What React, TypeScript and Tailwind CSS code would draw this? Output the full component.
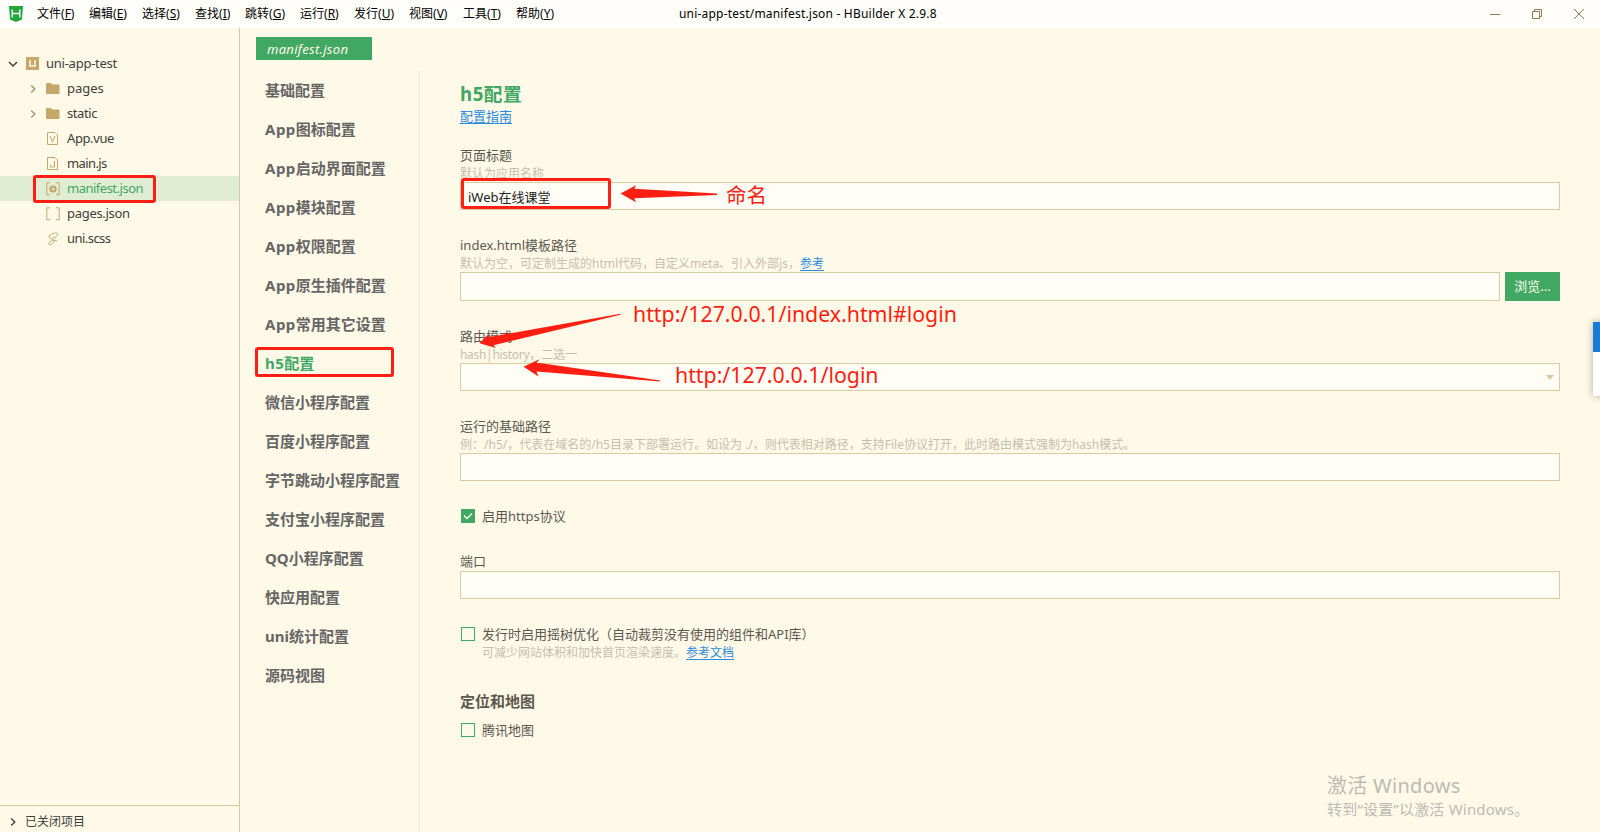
import { useState } from 'react';
import type { ReactNode } from 'react';

const MENUS = [
  { label: '文件', key: 'F', width: 'w-[52px]' },
  { label: '编辑', key: 'E', width: 'w-[53px]' },
  { label: '选择', key: 'S', width: 'w-[53px]' },
  { label: '查找', key: 'I', width: 'w-[50px]' },
  { label: '跳转', key: 'G', width: 'w-[55px]' },
  { label: '运行', key: 'R', width: 'w-[54px]' },
  { label: '发行', key: 'U', width: 'w-[55px]' },
  { label: '视图', key: 'V', width: 'w-[54px]' },
  { label: '工具', key: 'T', width: 'w-[53px]' },
  { label: '帮助', key: 'Y', width: 'w-[53px]' },
];

const SECTIONS = [
  { prefix: '', name: '基础配置' },
  { prefix: 'App', name: '图标配置' },
  { prefix: 'App', name: '启动界面配置' },
  { prefix: 'App', name: '模块配置' },
  { prefix: 'App', name: '权限配置' },
  { prefix: 'App', name: '原生插件配置' },
  { prefix: 'App', name: '常用其它设置' },
  { prefix: 'h5', name: '配置' },
  { prefix: '', name: '微信小程序配置' },
  { prefix: '', name: '百度小程序配置' },
  { prefix: '', name: '字节跳动小程序配置' },
  { prefix: '', name: '支付宝小程序配置' },
  { prefix: '', name: 'QQ小程序配置' },
  { prefix: '', name: '快应用配置' },
  { prefix: '', name: 'uni统计配置' },
  { prefix: '', name: '源码视图' },
];

type IconName = 'folder' | 'vue' | 'js' | 'manifest' | 'brackets' | 'scss';

const FILES: { name: string; icon: IconName; tracking: string }[] = [
  { name: 'pages', icon: 'folder', tracking: 'tracking-normal' },
  { name: 'static', icon: 'folder', tracking: 'tracking-[-0.4px]' },
  { name: 'App.vue', icon: 'vue', tracking: 'tracking-[-0.4px]' },
  { name: 'main.js', icon: 'js', tracking: 'tracking-[-0.6px]' },
  { name: 'manifest.json', icon: 'manifest', tracking: 'tracking-[-0.5px]' },
  { name: 'pages.json', icon: 'brackets', tracking: 'tracking-[-0.3px]' },
  { name: 'uni.scss', icon: 'scss', tracking: 'tracking-[-0.55px]' },
];

function Chevron({ open = false, className }: { open?: boolean; className?: string }) {
  return (
    <svg width="10" height="10" viewBox="0 0 10 10" fill="none" stroke="currentColor" strokeWidth="1.5" className={className}>
      {open ? <path d="M1 3l4 4 4-4" /> : <path d="M3 1l4 4-4 4" />}
    </svg>
  );
}

function FileIcon({ icon }: { icon: IconName }) {
  return (
    <svg width="14" height="14" viewBox="0 0 14 14" fill="none" stroke="#c4a769" strokeWidth="1" className="shrink-0">
      {icon === 'folder' && <path d="M.5 1.500h4.500l1.500 1.500h6.500v8.500h-12.500z" fill="#c4a769" />}
      {(icon === 'vue' || icon === 'js') && <path d="M1.500.5h7.500l2.500 2.500v9.500h-10z" />}
      {icon === 'vue' && <path d="M4 4l2.500 6 2.500-6" />}
      {icon === 'js' && <path d="M8.500 4v6h-4v-2" />}
      {(icon === 'manifest' || icon === 'brackets') && (
        <path d="M4 .8h-3.200v12h3.200M10 .8h3.200v12h-3.200" />
      )}
      {icon === 'manifest' && (
        <>
          <circle cx="7" cy="7" r="2.200" strokeWidth="1.800" />
          <path d="M7 3v1.500M7 9.500v1.500M3 7h1.500M9.500 7h1.500M4.200 4.200l1 1M8.800 8.800l1 1M9.800 4.200l-1 1M5.200 8.800l-1 1" strokeWidth="1.300" />
        </>
      )}
      {icon === 'scss' && (
        <path d="M11.500 3.500c1.200-2.200-1-3.200-4-2.200-4 1.200-5.800 3.900-3.300 5 2.500 1.200 4.300 1.200 3.800 3.200-.7 2.500-5 4-5.500 2.500-.5-1.300 2-3.300 5.500-3.800l3 .3M11.500 3.500c-1.500 2-3.500 2.500-5 2" strokeWidth="1" />
      )}
    </svg>
  );
}

function TitleBar() {
  return (
    <header className="relative flex h-7 shrink-0 items-center bg-[#fffefa] text-xs text-black">
      <svg width="14" height="16" viewBox="0 0 14 16" className="ml-[9px] shrink-0">
        <path d="M0 0h14l-1 13.500-6 2.500-6-2.500z" fill="#23a63c" />
        <path d="M3.200 3.500v8M10.800 3.500v8M3.200 7.500h7.600" stroke="#fff" strokeWidth="1.400" />
      </svg>
      <nav className="ml-[14px] flex">
        {MENUS.map((menu) => (
          <button key={menu.key} type="button" className={`${menu.width} text-left leading-4 whitespace-nowrap`}>
            {menu.label}(<span className="underline underline-offset-1">{menu.key}</span>)
          </button>
        ))}
      </nav>
      <h1 className="absolute left-[679px] top-1.5 leading-4 tracking-[0.2px] whitespace-nowrap">
        uni-app-test/manifest.json - HBuilder X 2.9.8
      </h1>
      <div className="ml-auto mr-4 flex items-center gap-8 text-[#8d7a4e]">
        <svg width="10" height="10" viewBox="0 0 10 10" stroke="currentColor">
          <path d="M0 5.500h10" />
        </svg>
        <svg width="10" height="10" viewBox="0 0 10 10" fill="none" stroke="currentColor">
          <path d="M.5 2.500h7v7h-7zM2.500 2.500v-2h7v7h-2" />
        </svg>
        <svg width="10" height="10" viewBox="0 0 10 10" stroke="currentColor">
          <path d="M0 0l10 10M10 0l-10 10" />
        </svg>
      </div>
    </header>
  );
}

function Sidebar() {
  return (
    <aside className="flex w-60 shrink-0 flex-col border-r border-[#d6c99b] text-[13px] text-[#403e39]">
      <div className="mt-[23px] flex h-[25px] items-center">
        <Chevron open className="ml-2 text-[#403e39]" />
        <svg width="13" height="13" viewBox="0 0 13 13" className="ml-2">
          <path d="M0 0h13v13h-13z" fill="#c4a769" />
          <path d="M4 3v6h5v-6" fill="none" stroke="#fff9e8" strokeWidth="1.500" />
        </svg>
        <span className="ml-[7px] tracking-[-0.25px]">uni-app-test</span>
      </div>
      {FILES.map((file) => {
        const active = file.icon === 'manifest';
        return (
          <div
            key={file.name}
            className={`relative flex h-[25px] items-center pl-7 ${active ? 'bg-[#e0edd3] text-[#41a863]' : ''}`}
          >
            <span className="w-[18px]">
              {file.icon === 'folder' && <Chevron className="scale-90 text-[#9c9377]" />}
            </span>
            <FileIcon icon={file.icon} />
            <span className={`ml-[7px] ${file.tracking}`}>{file.name}</span>
            {active && (
              <span className="absolute -top-px left-[33px] h-7 w-[123px] rounded-[3px] border-3 border-[#ff1f12]" />
            )}
          </div>
        );
      })}
      <div className="mt-auto flex h-[27px] items-center border-t border-[#d6c99b] pt-1.5 text-xs">
        <Chevron className="ml-2 scale-90" />
        <span className="ml-[7px]">已关闭项目</span>
      </div>
    </aside>
  );
}

function Label({ children }: { children: ReactNode }) {
  return <div className="h-[18px] leading-4 whitespace-nowrap">{children}</div>;
}

function Hint({ children }: { children: ReactNode }) {
  return <div className="h-[17px] text-xs leading-[17px] whitespace-nowrap text-[#c6bfae]">{children}</div>;
}

function Link({ children }: { children: ReactNode }) {
  return (
    <a href="#" className="text-[#2a8be0] underline underline-offset-2">
      {children}
    </a>
  );
}

function Checkbox({ checked = false, children }: { checked?: boolean; children: ReactNode }) {
  return (
    <label className="ml-px flex h-[18px] items-center gap-[7px] leading-[18px] whitespace-nowrap">
      <span className={`flex size-3.5 items-center justify-center border border-[#41a863] ${checked ? 'bg-[#41a863]' : ''}`}>
        {checked && (
          <svg width="10" height="8" viewBox="0 0 10 8" fill="none" stroke="#fff9e8" strokeWidth="1.300" className="shrink-0">
            <path d="M1 3.500l3 3 5-5" />
          </svg>
        )}
      </span>
      {children}
    </label>
  );
}

const INPUT = 'block h-7 w-full border border-[#d8cca0] bg-[#fffdf5] px-[7px] text-[13px] text-[#222] outline-none';

// Red pen marks drawn over the form
function Annotations() {
  return (
    <div className="pointer-events-none absolute inset-0 text-[20.5px] leading-6 whitespace-nowrap text-[#ff1f12]">
      <span className="absolute left-[461px] top-[178px] h-[31px] w-[150px] rounded-[3px] border-3 border-[#ff1f12]" />
      <svg width="1600" height="832" viewBox="0 0 1600 832" fill="#ff1f12" className="absolute left-0 top-0">
        <path d="M620.500 193.500L636 185.300l-1.700 3.500L717 193.500v1.600L634.300 198.300l1.700 4z" />
        <path d="M479.500 343.300L488.500 334l-.5 3.200L620.500 313.800v1L493.500 345.200l2.500 2.800z" />
        <path d="M523.500 366.700L539.500 359.300l-3 3.700 5 .2L660 380.500v1L536.500 371.500l2 5z" />
      </svg>
      <span className="absolute left-[726px] top-[183px]">命名</span>
      <span className="absolute left-[633px] top-[302px] text-[21.3px]">http:/127.0.0.1/index.html#login</span>
      <span className="absolute left-[675px] top-[363px] text-[21.3px]">http:/127.0.0.1/login</span>
    </div>
  );
}

export default function App() {
  const [title, setTitle] = useState('iWeb在线课堂');

  return (
    <div className="relative flex h-[832px] w-[1600px] flex-col overflow-hidden bg-[#fff9e8] font-['Noto_Sans','Noto_Sans_CJK_SC',sans-serif]">
      <TitleBar />
      <div className="flex min-h-0 flex-1">
        <Sidebar />
        <main className="flex min-w-0 flex-1 flex-col">
          <div className="ml-4 mt-[9px] h-[23px] w-[116px] bg-[#41a863] pl-[11px] text-[13px] leading-[24px] tracking-[0.3px] text-[#fff9e8] italic">
            manifest.json
          </div>
          <div className="mt-[11px] flex min-h-0 flex-1">
            <nav className="w-[180px] shrink-0 border-r border-[#f1e8d2] text-[15px] font-bold text-[#666]">
              {SECTIONS.map(({ prefix, name }) => {
                const active = prefix === 'h5';
                return (
                  <div key={name} className="relative flex h-[39px] items-center pl-[25px] whitespace-nowrap">
                    <span className={active ? 'text-[#41a863]' : ''}>
                      <span className="tracking-[0.5px]">{prefix}</span>
                      {name}
                    </span>
                    {active && (
                      <span className="absolute left-[15px] top-[3px] h-[30px] w-[139px] rounded-[3px] border-3 border-[#ff1f12]" />
                    )}
                  </div>
                );
              })}
            </nav>
            <form className="ml-10 w-[1100px] pt-[11px] text-[13px] text-[#5c584f]">
              <h2 className="h-6 text-[18.67px] leading-6 font-bold tracking-[0.5px] text-[#41a863]">h5配置</h2>
              <div className="mt-px h-[19px] leading-[18px]">
                <Link>配置指南</Link>
              </div>

              <div className="mt-[21px]">
                <Label>页面标题</Label>
                <Hint>默认为应用名称</Hint>
                <input className={INPUT} value={title} onChange={(e) => setTitle(e.target.value)} />
              </div>

              <div className="mt-[27px]">
                <Label>index.html模板路径</Label>
                <Hint>
                  默认为空，可定制生成的html代码，自定义meta、引入外部js，<Link>参考</Link>
                </Hint>
                <div className="flex h-[29px] gap-[5px]">
                  <div className="flex-1 border border-[#d8cca0] bg-[#fffdf5]" />
                  <button type="button" className="w-[55px] bg-[#41a863] text-[#fff9e8]">
                    浏览...
                  </button>
                </div>
              </div>

              <div className="mt-[27px]">
                <Label>路由模式</Label>
                <Hint>
                  <span className="tracking-[-0.3px]">hash|history</span>，二选一
                </Hint>
                <div className="flex h-7 items-center justify-end border border-[#d8cca0] bg-[#fffdf5] pr-[5px]">
                  <svg width="8" height="5" viewBox="0 0 8 5" fill="#d8c898">
                    <path d="M0 0h8l-4 5z" />
                  </svg>
                </div>
              </div>

              <div className="mt-[27px]">
                <Label>运行的基础路径</Label>
                <Hint>例：/h5/，代表在域名的/h5目录下部署运行。如设为 ./，则代表相对路径，支持File协议打开，此时路由模式强制为hash模式。</Hint>
                <input className={INPUT} />
              </div>

              <div className="mt-[26px]">
                <Checkbox checked>启用https协议</Checkbox>
              </div>

              <div className="mt-7">
                <Label>端口</Label>
                <input className={INPUT} />
              </div>

              <div className="mt-[26px]">
                <Checkbox>发行时启用摇树优化（自动裁剪没有使用的组件和API库）</Checkbox>
                <div className="pl-[22px] pt-px">
                  <Hint>
                    可减少网站体积和加快首页渲染速度。<Link>参考文档</Link>
                  </Hint>
                </div>
              </div>

              <h3 className="mt-[30px] h-[21px] text-[15px] leading-5 font-bold">定位和地图</h3>
              <div className="mt-[9px]">
                <Checkbox>腾讯地图</Checkbox>
              </div>
            </form>
          </div>
        </main>
      </div>

      <Annotations />

      <div className="absolute left-[1327px] top-[772px] whitespace-nowrap text-[#bdbab3]">
        <div className="h-[26px] text-xl leading-7 tracking-[0.3px]">激活 Windows</div>
        <div className="text-[15px] leading-[22px] tracking-[0.2px]">转到“设置”以激活 Windows。</div>
      </div>
      <div className="absolute left-[1593px] top-[322px] h-[74px] w-4 bg-white shadow-[0_0_8px_rgba(0,0,0,0.3)]">
        <div className="h-[30px] bg-[#177ad3]" />
      </div>
    </div>
  );
}
